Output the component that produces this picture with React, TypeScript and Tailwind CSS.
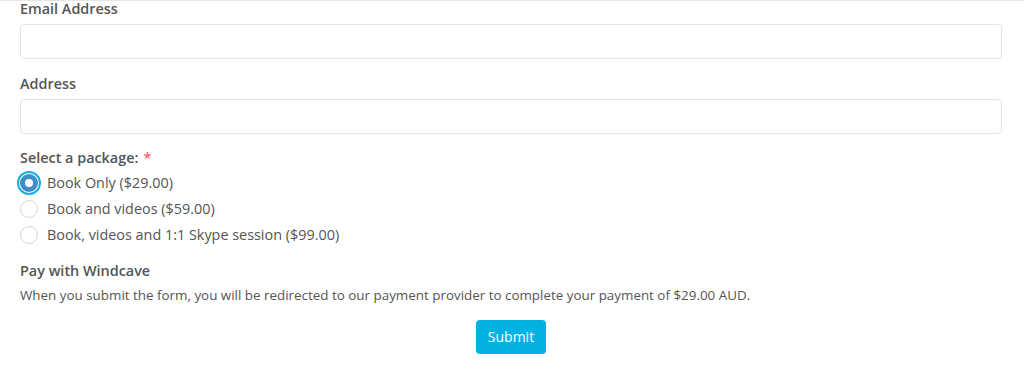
import { useState } from "react";

const packages = [
  { id: "book", label: "Book Only ($29.00)" },
  { id: "videos", label: "Book and videos ($59.00)" },
  { id: "skype", label: "Book, videos and 1:1 Skype session ($99.00)" },
];

export default function App() {
  const [selected, setSelected] = useState("book");

  return (
    <div className="min-h-[377px] border-t border-[#e6e6e6] bg-white pl-5 pr-[22px] text-[14.4px] leading-[18px] text-[#555] [font-family:'Open_Sans',sans-serif]">
      <label className="-mt-px block font-semibold">Email Address</label>
      <input className="mt-[6px] block h-[35px] w-full rounded-[4px] border border-[#e2e4e4] bg-white px-3 outline-none" />

      <label className="mt-[16px] block font-semibold">Address</label>
      <input className="mt-[6px] block h-[35px] w-full rounded-[4px] border border-[#e2e4e4] bg-white px-3 outline-none" />

      <p className="mt-[15px] font-semibold">
        Select a package:<span className="ml-[5px] text-[#f0606e]">*</span>
      </p>
      <div className="mt-[3px] flex flex-col">
        {packages.map((p) => {
          const checked = selected === p.id;
          return (
            <label key={p.id} className="flex h-[26px] cursor-pointer items-center gap-[9px]" onClick={() => setSelected(p.id)}>
              {checked ? (
                <span className="flex h-[18px] w-[18px] items-center justify-center rounded-full bg-[#3f8dc8] shadow-[0_0_0_1px_#fff,0_0_0_3px_#16aedf]">
                  <span className="h-[8px] w-[8px] rounded-full bg-white" />
                </span>
              ) : (
                <span className="h-[18px] w-[18px] rounded-full border border-[#d4d6d8] bg-white" />
              )}
              <span>{p.label}</span>
            </label>
          );
        })}
      </div>

      <p className="mt-[14px] font-semibold">Pay with Windcave</p>
      <p className="mt-[6px] text-[13.4px]">
        When you submit the form, you will be redirected to our payment provider to complete your payment of $29.00 AUD.
      </p>

      <div className="mt-4 flex justify-center">
        <button className="h-[34px] w-[70px] rounded-[4px] bg-[#00b1e1] text-[14px] text-white">Submit</button>
      </div>
    </div>
  );
}
